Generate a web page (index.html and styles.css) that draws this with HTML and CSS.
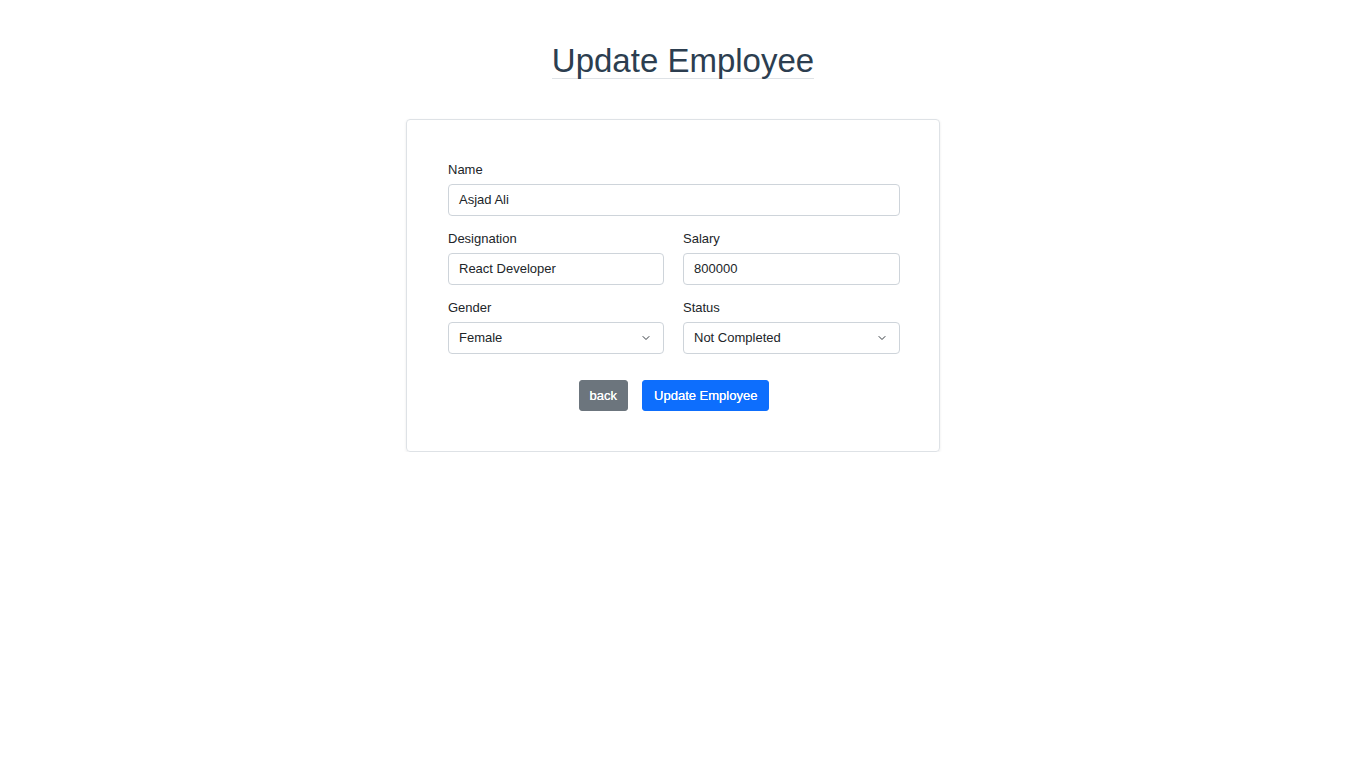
FILE: index.html
```html
<!DOCTYPE html>
<html lang="en">
<head>
<meta charset="utf-8">
<title>Update Employee</title>
<link rel="stylesheet" href="styles.css">
</head>
<body>
<div class="page">
  <div class="title-wrap"><h1 class="title">Update Employee</h1></div>
  <form class="card">
    <div class="field">
      <label class="label">Name</label>
      <div class="input">Asjad Ali</div>
    </div>
    <div class="row">
      <div class="field">
        <label class="label">Designation</label>
        <div class="input">React Developer</div>
      </div>
      <div class="field">
        <label class="label">Salary</label>
        <div class="input">800000</div>
      </div>
    </div>
    <div class="row">
      <div class="field">
        <label class="label">Gender</label>
        <div class="input select"><span>Female</span>
          <svg class="chev" width="10" height="8" viewBox="0 0 16 16"><path d="M2 5l6 6 6-6" fill="none" stroke="#343a40" stroke-width="2" stroke-linecap="round" stroke-linejoin="round"/></svg>
        </div>
      </div>
      <div class="field">
        <label class="label">Status</label>
        <div class="input select"><span>Not Completed</span>
          <svg class="chev" width="10" height="8" viewBox="0 0 16 16"><path d="M2 5l6 6 6-6" fill="none" stroke="#343a40" stroke-width="2" stroke-linecap="round" stroke-linejoin="round"/></svg>
        </div>
      </div>
    </div>
    <div class="actions">
      <button type="button" class="btn btn-secondary">back</button>
      <button type="button" class="btn btn-primary">Update Employee</button>
    </div>
  </form>
</div>
</body>
</html>
```
FILE: styles.css
```css
* { box-sizing: border-box; }
html, body { margin: 0; padding: 0; background: #fff; }
body {
  font-family: "Liberation Sans", Arial, sans-serif;
  color: #212529;
  font-size: 13px;
}
.page {
  display: flex;
  flex-direction: column;
  align-items: center;
}
.title-wrap {
  margin-top: 44px;
  text-align: center;
}
.title {
  display: inline-block;
  margin: 0;
  font-size: 33px;
  font-weight: 400;
  line-height: 33.6px;
  color: #2c3e50;
  border-bottom: 1px solid #dee2e6;
}
.card {
  margin-top: 40px;
  margin-right: 20px;
  width: 534px;
  border: 1px solid #dee2e6;
  border-radius: 4px;
  box-shadow: 0 1px 3px rgba(0,0,0,0.08);
  padding: 40px 39px 40px 41px;
  display: flex;
  flex-direction: column;
  gap: 13px;
}
.row {
  display: grid;
  grid-template-columns: 216px 217px;
  column-gap: 19px;
}
.field {
  display: flex;
  flex-direction: column;
}
.label {
  line-height: 19px;
  margin-bottom: 5px;
  color: #212529;
}
.input {
  height: 32px;
  border: 1px solid #ced4da;
  border-radius: 4px;
  padding: 0 10px;
  display: flex;
  align-items: center;
  color: #212529;
  line-height: 19px;
}
.select { justify-content: space-between; padding-right: 12px; }
.chev { display: block; }
.actions {
  display: flex;
  justify-content: center;
  gap: 14px;
  margin-top: 13px;
}
.btn {
  font-family: inherit;
  font-size: 13px;
  height: 31px;
  padding: 0 10px;
  border: 1px solid transparent;
  border-radius: 3px;
  color: #fff;
  cursor: pointer;
  font-weight: 400;
  text-shadow: 0 0 0.4px #fff;
}
.btn-secondary { background: #6c757d; border-color: #6c757d; }
.btn-primary { background: #0d6efd; border-color: #0d6efd; padding: 0 11px; }
```
